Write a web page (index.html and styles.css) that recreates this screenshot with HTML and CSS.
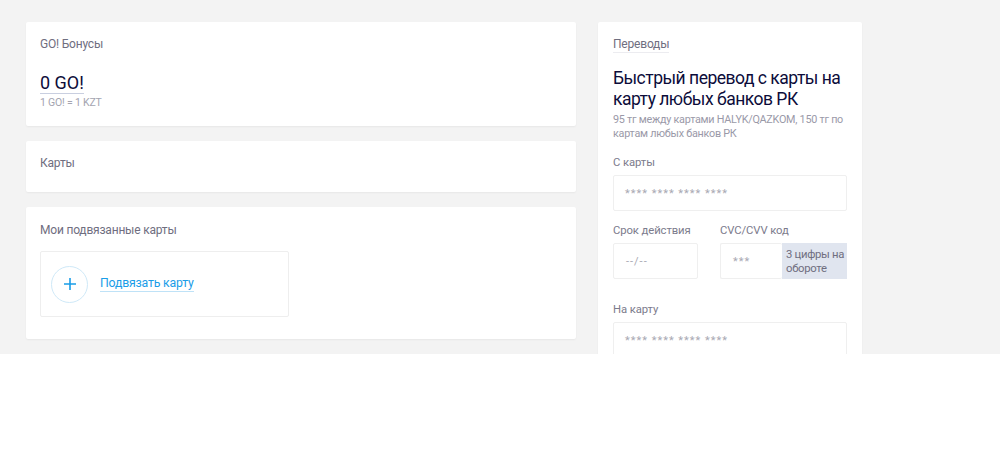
FILE: index.html
```html
<!DOCTYPE html>
<html lang="ru">
<head>
    <meta charset="UTF-8">
    <meta name="viewport" content="width=device-width, initial-scale=1.0">
    <title>Кабинет</title>
    <link rel="stylesheet" href="styles.css">
</head>
<body>
    <div class="page">
        <div class="main">
            <div class="card bonus">
                <div class="card-title">GO! Бонусы</div>
                <div class="bonus-value"><span>0 GO!</span></div>
                <div class="bonus-rate">1 GO! = 1 KZT</div>
            </div>
            <div class="card cards">
                <div class="card-title">Карты</div>
            </div>
            <div class="card linked">
                <div class="card-title">Мои подвязанные карты</div>
                <div class="add-card">
                    <div class="add-circle">
                        <svg width="14" height="14" viewBox="0 0 14 14">
                            <path d="M7 1v12M1 7h12" stroke="#1a9de8" stroke-width="1.6" fill="none"/>
                        </svg>
                    </div>
                    <a href="#" class="add-link">Подвязать карту</a>
                </div>
            </div>
        </div>
        <div class="side">
            <div class="card transfer">
                <div class="card-title"><span class="dotted">Переводы</span></div>
                <h2>Быстрый перевод с карты на карту любых банков РК</h2>
                <p class="note">95 тг между картами HALYK/QAZKOM, 150 тг по картам любых банков РК</p>

                <label class="field-label">С карты</label>
                <div class="input">**** **** **** ****</div>

                <div class="row">
                    <div class="col-date">
                        <label class="field-label">Срок действия</label>
                        <div class="input small">--/--</div>
                    </div>
                    <div class="col-cvc">
                        <label class="field-label">CVC/CVV код</label>
                        <div class="cvc">
                            <div class="input cvc-input">***</div>
                            <div class="cvc-hint">3 цифры на обороте</div>
                        </div>
                    </div>
                </div>

                <label class="field-label to">На карту</label>
                <div class="input">**** **** **** ****</div>
            </div>
        </div>
    </div>
</body>
</html>
```

FILE: styles.css
```css
body {
    margin: 0;
    padding: 0;
    background-color: #fff;
    font-family: Roboto, "Noto Sans", sans-serif;
    color: #6f6e80;
}

.page {
    display: flex;
    gap: 22px;
    height: 354px;
    box-sizing: border-box;
    padding: 22px 0 0 26px;
    background-color: #f3f3f3;
    overflow: hidden;
}

.main {
    width: 550px;
    display: flex;
    flex-direction: column;
    gap: 15px;
}

.side {
    width: 264px;
}

.card {
    background: #fff;
    border-radius: 2px;
    box-shadow: 0 1px 2px rgba(0, 0, 0, 0.05);
    padding: 14px 14px 20px;
}

.card-title {
    font-size: 12px;
    line-height: 16px;
    letter-spacing: -0.2px;
    color: #6f6e80;
}

.bonus {
    padding-bottom: 17px;
}

.bonus-value {
    margin-top: 20px;
    font-size: 18px;
    line-height: 22px;
    color: #0c0c3a;
}

.bonus-value span {
    border-bottom: 1px solid #c9cfe0;
}

.bonus-rate {
    margin-top: 3px;
    font-size: 10.5px;
    line-height: 12px;
    letter-spacing: -0.2px;
    color: #a4a4b0;
}

.cards {
    padding-bottom: 21px;
}

.linked {
    padding-top: 15px;
    padding-bottom: 22px;
}

.add-card {
    margin-top: 13px;
    width: 249px;
    height: 66px;
    box-sizing: border-box;
    border: 1px solid #eeeeee;
    border-radius: 2px;
    display: flex;
    align-items: center;
    padding-left: 10px;
    gap: 12px;
}

.add-circle {
    width: 37px;
    height: 37px;
    box-sizing: border-box;
    border: 1px solid #cfe9f8;
    border-radius: 50%;
    display: flex;
    align-items: center;
    justify-content: center;
}

.add-link {
    font-size: 12.3px;
    letter-spacing: -0.2px;
    color: #1a9de8;
    text-decoration: none;
    border-bottom: 1px solid #bfe2f7;
    line-height: 15px;
}

.transfer {
    padding: 14px 15px 20px;
    height: 400px;
}

.dotted {
    border-bottom: 1px solid #ececf0;
    padding-bottom: 1px;
}

.transfer h2 {
    margin: 16px 0 0;
    font-size: 17.5px;
    line-height: 21px;
    letter-spacing: -0.5px;
    font-weight: normal;
    color: #0c0c3a;
}

.note {
    margin: 3px 0 0;
    font-size: 10.8px;
    line-height: 14px;
    letter-spacing: -0.25px;
    color: #9a99a8;
}

.field-label {
    display: block;
    margin-top: 14px;
    font-size: 11.3px;
    line-height: 16px;
    letter-spacing: -0.1px;
    color: #7c7b8c;
}

.input {
    margin-top: 4px;
    height: 36px;
    box-sizing: border-box;
    border: 1px solid #efefef;
    border-radius: 2px;
    padding: 0 11px;
    display: flex;
    align-items: center;
    font-size: 11px;
    color: #a9a9b3;
    letter-spacing: 1px;
}

.row {
    display: flex;
    gap: 22px;
}

.col-date {
    width: 85px;
}

.col-cvc {
    flex: 1;
}

.row .field-label {
    margin-top: 12px;
}

.small {
    padding-left: 12px;
}

.cvc {
    display: flex;
    margin-top: 4px;
}

.cvc .cvc-input {
    margin-top: 0;
    width: 62px;
    padding-left: 12px;
    border-right: none;
}

.cvc-hint {
    flex: 1;
    height: 36px;
    box-sizing: border-box;
    background-color: #e0e5ef;
    padding: 5px 2px 0 4px;
    font-size: 11.3px;
    line-height: 13.5px;
    letter-spacing: -0.3px;
    color: #6f6e80;
}

.to {
    margin-top: 23px;
}
```
